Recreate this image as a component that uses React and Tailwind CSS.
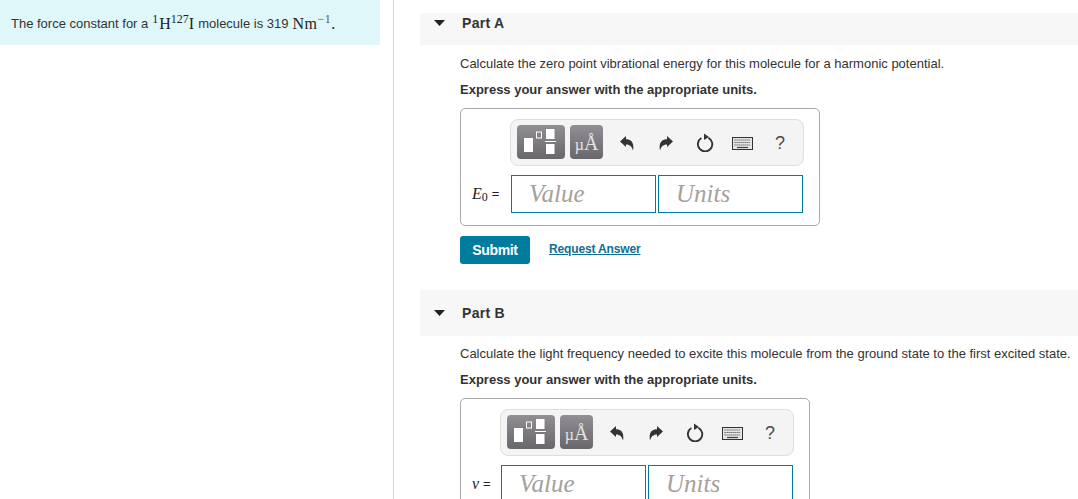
const sans = "font-['Liberation_Sans',Arial,sans-serif]";

function TemplateIcon() {
  return (
    <svg width="48" height="34" viewBox="0 0 48 34" className="block">
      <rect x="7" y="13" width="9" height="14" fill="#fff" />
      <rect x="19.5" y="7" width="5" height="6" fill="none" stroke="#fff" strokeWidth="1" />
      <rect x="29" y="4" width="8.5" height="10" fill="#fff" />
      <rect x="28" y="16" width="11" height="1" fill="#fff" />
      <rect x="29" y="19" width="8.5" height="10" fill="#fff" />
    </svg>
  );
}

function UndoIcon({ flip }) {
  return (
    <svg width="14" height="15" viewBox="0 0 14 15" className={flip ? '-scale-x-100' : ''}>
      <path d="M0 5.5 L6 0 V3.2 C11 3.2 14.5 6.5 13 14.5 C12 10.5 10 8.4 6 8.4 V11 Z" fill="#333" />
    </svg>
  );
}

function ResetIcon() {
  return (
    <svg width="18" height="19" viewBox="0 0 18 19">
      <path d="M5.4 5 A7.2 7.2 0 1 0 12.4 4.8" fill="none" stroke="#333" strokeWidth="1.9" />
      <path d="M8 0.5 L13 4 L8 7 Z" fill="#333" />
    </svg>
  );
}

function KeyboardIcon() {
  return (
    <svg width="21" height="13" viewBox="0 0 21 13">
      <rect x="0.5" y="0.5" width="20" height="12" fill="#e4e4e4" stroke="#333" />
      <path d="M2.5 3 H18.5 M2.5 5.5 H18.5 M2.5 8 H18.5" stroke="#555" strokeWidth="1.2" strokeDasharray="1.2 0.8" />
      <path d="M5 10.5 H16" stroke="#444" strokeWidth="1.2" />
    </svg>
  );
}

function Toolbar() {
  return (
    <div className="flex h-[47px] w-[294px] items-start rounded-lg border border-[#dedede] bg-[#f4f4f4] pl-[6px] pt-[5px]">
      <div className="h-[34px] w-[48px] rounded-[4px] bg-gradient-to-b from-[#918f94] to-[#69676b]">
        <TemplateIcon />
      </div>
      <div className="ml-[5px] flex h-[34px] w-[33px] items-end justify-center rounded-[4px] bg-gradient-to-b from-[#918f94] to-[#69676b] pb-[6px] font-['Liberation_Serif',serif] leading-none text-[#e4e4e4]">
        <span className="text-[16px]">µ</span>
        <span className="text-[20px]">Å</span>
      </div>
      <div className="ml-[5px] flex h-[34px] items-center">
        <span className="flex w-[38px] justify-center pt-[3px]"><UndoIcon /></span>
        <span className="flex w-[39px] justify-center pt-[3px]"><UndoIcon flip /></span>
        <span className="flex w-[38px] justify-center pt-[1px] pl-[1px]"><ResetIcon /></span>
        <span className="flex w-[38px] justify-center pt-[3px]"><KeyboardIcon /></span>
        <span className={`flex w-[38px] justify-center pt-[2px] text-[18px] text-[#4a4a4a] ${sans}`}>?</span>
      </div>
    </div>
  );
}

function AnswerInput({ placeholder }) {
  return (
    <div className="flex h-[38px] w-[145px] items-center border border-[#007c9e] pl-[17px] font-['Liberation_Serif',serif] text-[25px] italic text-[#a5a19c]">
      {placeholder}
    </div>
  );
}

function Part({ title, headerClass, textClass, question, label, labelClass, showButtons }) {
  return (
    <section>
      <div className={`flex items-center bg-[#f7f7f7] ${headerClass}`}>
        <svg width="11" height="6" viewBox="0 0 11 6" className="ml-[14px]">
          <path d="M0 0 H11 L5.5 6 Z" fill="#222" />
        </svg>
        <h2 className="ml-[17px] text-[14px] font-bold tracking-[0.3px] text-[#333]">{title}</h2>
      </div>
      <div className="pl-[40px]">
        <p className={`text-[13px] leading-[16px] text-[#333] whitespace-nowrap ${textClass}`}>{question}</p>
        <p className="mt-[10px] text-[13px] font-bold leading-[16px] text-[#333]">Express your answer with the appropriate units.</p>
        <div className="mt-[10px] inline-grid grid-cols-[auto_auto] rounded-[5px] border border-[#aaa] pb-[12px] pl-[11px] pr-[15px] pt-[10px]">
          <div />
          <Toolbar />
          <div className={`mt-[9px] flex items-center font-['Liberation_Serif',serif] text-[16px] text-[#222] ${labelClass}`}>{label}</div>
          <div className="ml-px mt-[9px] flex gap-[2px]">
            <AnswerInput placeholder="Value" />
            <AnswerInput placeholder="Units" />
          </div>
        </div>
        {showButtons && (
          <div className="mt-[10px] flex items-center">
            <button className="h-[28px] w-[70px] rounded-[3px] bg-[#007c9e] text-[14px] font-bold tracking-[-0.35px] text-white">Submit</button>
            <a className="ml-[19px] -mt-[2px] text-[12px] font-bold tracking-[-0.15px] text-[#0f6f94] underline">Request Answer</a>
          </div>
        )}
      </div>
    </section>
  );
}

export default function App() {
  return (
    <div className={`flex h-[499px] w-[1078px] overflow-hidden bg-white ${sans}`}>
      <aside className="w-[394px] shrink-0 border-r border-[#d5d8da]">
        <div className="flex h-[45px] w-[380px] items-center bg-[#e0f7fa] pl-[11px] pt-[2px] text-[13px] text-[#333] whitespace-nowrap">
          <span>The force constant for a</span>
          <span className="ml-[4px] font-['Liberation_Serif',serif] text-[16px] text-[#222]">
            <sup className="mr-px text-[12px]">1</sup>H<sup className="text-[12px]">127</sup>I
          </span>
          <span className="ml-[4px]">molecule is 319</span>
          <span className="ml-[4px] font-['Liberation_Serif',serif] text-[16px] tracking-[0.5px] text-[#222]">
            Nm<sup className="text-[12px] text-[#555]">−1</sup>.
          </span>
        </div>
      </aside>
      <main className="min-w-0 flex-1 pl-[26px] pt-[13px]">
        <Part
          title="Part A"
          headerClass="h-[32px] pb-[12px]"
          textClass="pt-[11px]"
          question="Calculate the zero point vibrational energy for this molecule for a harmonic potential."
          label={<><i>E</i><sub className="text-[12px]">0</sub><span className={`ml-[4px] text-[13px] ${sans}`}>=</span></>}
          labelClass="w-[38px]"
          showButtons
        />
        <div className="h-[26px]" />
        <Part
          title="Part B"
          headerClass="h-[46px]"
          textClass="pt-[10px]"
          question="Calculate the light frequency needed to excite this molecule from the ground state to the first excited state."
          label={<><i>v</i><span className={`ml-[4px] text-[13px] ${sans}`}>=</span></>}
          labelClass="w-[28px]"
        />
      </main>
    </div>
  );
}
